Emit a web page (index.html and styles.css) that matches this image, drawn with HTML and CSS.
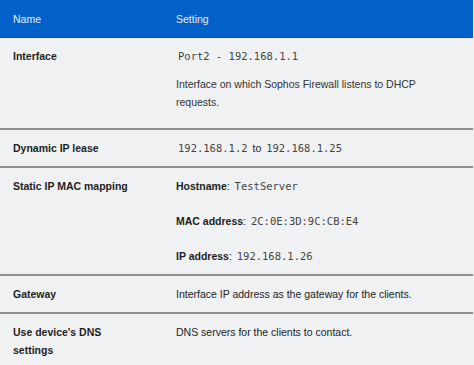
FILE: index.html
```html
<!DOCTYPE html>
<html lang="en">
<head>
  <meta charset="UTF-8">
  <title>DHCP settings</title>
  <link rel="stylesheet" href="styles.css">
</head>
<body>
  <table class="settings">
    <thead>
      <tr>
        <th class="col-name">Name</th>
        <th>Setting</th>
      </tr>
    </thead>
    <tbody>
      <tr>
        <td class="col-name">Interface</td>
        <td>
          <p><code>Port2 - 192.168.1.1</code></p>
          <p class="desc">Interface on which Sophos Firewall listens to DHCP requests.</p>
        </td>
      </tr>
      <tr>
        <td class="col-name">Dynamic IP lease</td>
        <td><p><code>192.168.1.2</code> to <code>192.168.1.25</code></p></td>
      </tr>
      <tr>
        <td class="col-name">Static IP MAC mapping</td>
        <td>
          <p class="pair"><b>Hostname</b>: <code>TestServer</code></p>
          <p class="pair"><b>MAC address</b>: <code>2C:0E:3D:9C:CB:E4</code></p>
          <p class="pair"><b>IP address</b>: <code>192.168.1.26</code></p>
        </td>
      </tr>
      <tr>
        <td class="col-name">Gateway</td>
        <td><p>Interface IP address as the gateway for the clients.</p></td>
      </tr>
      <tr>
        <td class="col-name">Use device's DNS settings</td>
        <td><p>DNS servers for the clients to contact.</p></td>
      </tr>
    </tbody>
  </table>
</body>
</html>
```

FILE: styles.css
```css
body {
  margin: 0;
  background: #f0f1f2;
  font-family: 'Liberation Sans', Arial, sans-serif;
  font-size: 10.5px;
  line-height: 18px;
  color: #222;
}

.settings {
  width: 473px;
  border-collapse: collapse;
  table-layout: fixed;
}

.settings thead th {
  background: #0161c9;
  border-bottom: 1px solid #0a4fa5;
  color: #e6eefa;
  font-weight: normal;
  text-align: left;
  height: 37px;
  padding: 0;
  vertical-align: middle;
}

.settings td {
  padding: 9px 0;
  border-bottom: 2px solid #8e8e8e;
  vertical-align: top;
}

.settings tbody tr:last-child td {
  border-bottom: none;
}

.settings .col-name {
  width: 176px;
  padding-left: 13px;
  padding-right: 40px;
  box-sizing: border-box;
}

.settings td.col-name {
  font-weight: bold;
  color: #1e1e1e;
}

.settings td p {
  margin: 0;
}

.settings .desc {
  margin: 10px 0 8px;
  color: #333;
  padding-right: 40px;
}

.settings .pair + .pair {
  margin-top: 17px;
}

.settings b {
  color: #1e1e1e;
}

code {
  font-family: 'DejaVu Sans Mono', 'Liberation Mono', monospace;
  font-size: 10.5px;
  color: #444;
  padding: 0 2px;
}
```
